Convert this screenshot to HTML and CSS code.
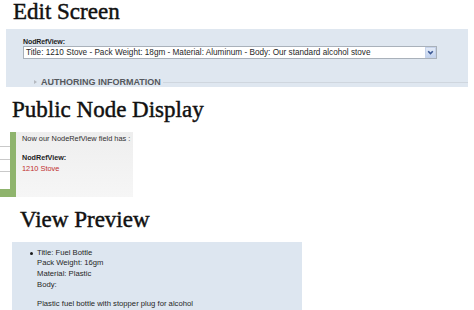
FILE: index.html
```html
<!DOCTYPE html>
<html>
<head>
<meta charset="utf-8">
<link rel="stylesheet" href="styles.css">
</head>
<body>
<h1 class="title title-edit">Edit Screen</h1>
<div class="edit-panel">
  <div class="field-label">NodRefView:</div>
  <div class="select">
    <div class="select-text">Title: 1210 Stove - Pack Weight: 18gm - Material: Aluminum - Body: Our standard alcohol stove</div>
    <div class="select-btn">
      <svg width="9" height="11" viewBox="0 0 9 11"><polyline points="2.2,4.3 4.5,6.6 6.8,4.3" fill="none" stroke="#3a5793" stroke-width="1.6"/></svg>
    </div>
  </div>
  <div class="legend-row">
    <span class="legend-arrow"></span>
    <span class="legend-text">AUTHORING INFORMATION</span>
    <span class="legend-line"></span>
  </div>
</div>

<h1 class="title title-public">Public Node Display</h1>
<div class="public-panel">
  <div class="side">
    <div class="side-row r1"></div>
    <div class="side-row r2"></div>
    <div class="side-row r3"></div>
    <div class="side-green"></div>
  </div>
  <div class="green-bar"></div>
  <div class="node-content">
    <div class="node-intro">Now our NodeRefView field has :</div>
    <div class="node-label">NodRefView:</div>
    <div class="node-value">1210 Stove</div>
  </div>
</div>

<h1 class="title title-view">View Preview</h1>
<div class="preview-panel">
  <div class="item">
    <span class="bullet"></span>
    <div class="item-text">
      <div>Title: Fuel Bottle<br>Pack Weight: 16gm<br>Material: Plastic<br>Body:</div>
      <p class="body-text">Plastic fuel bottle with stopper plug for alcohol</p>
    </div>
  </div>
</div>
</body>
</html>
```

FILE: styles.css
```css
html, body {
  margin: 0;
  padding: 0;
  background: #ffffff;
  width: 474px;
  height: 310px;
  overflow: hidden;
  font-family: "Liberation Sans", Arial, sans-serif;
}

.title {
  margin: 0;
  font-family: "Liberation Serif", "Times New Roman", serif;
  font-weight: normal;
  font-size: 23px;
  line-height: 23px;
  color: #111111;
  white-space: nowrap;
  -webkit-text-stroke: 0.45px #111111;
}

.title-edit { padding-left: 13px; }
.title-public { padding-left: 12px; margin-top: 11px; }
.title-view { padding-left: 20px; margin-top: 11px; }

/* Edit screen */
.edit-panel {
  margin-top: 6px;
  margin-left: 6px;
  width: 462px;
  height: 58px;
  overflow: hidden;
  background: #dfe7f0;
  padding-left: 17px;
  padding-top: 9px;
  box-sizing: border-box;
}

.field-label {
  font-size: 7px;
  font-weight: bold;
  line-height: 8px;
  color: #1d1d1d;
  letter-spacing: -0.1px;
}

.select {
  width: 414px;
  height: 13px;
  box-sizing: border-box;
  border: 1px solid #a9b1ba;
  background: #ffffff;
  display: flex;
}

.select-text {
  flex: 1;
  font-size: 8.2px;
  line-height: 11px;
  color: #1f1f1f;
  padding-left: 2px;
  white-space: nowrap;
  overflow: hidden;
}

.select-btn {
  width: 11px;
  height: 11px;
  box-sizing: border-box;
  border: 1px solid #c6d3ea;
  background: linear-gradient(#e3ebf8, #c3d3ee);
  display: flex;
  align-items: center;
  justify-content: center;
}

.select-btn svg { display: block; }

.legend-row {
  margin-top: 18px;
  height: 10px;
  display: flex;
  align-items: center;
  margin-left: 11px;
}

.legend-arrow {
  width: 0;
  height: 0;
  border-top: 2.5px solid transparent;
  border-bottom: 2.5px solid transparent;
  border-left: 3px solid #b4b9bf;
  margin-right: 4px;
}

.legend-text {
  font-size: 9px;
  font-weight: bold;
  line-height: 10px;
  color: #55585d;
  white-space: nowrap;
}

.legend-line {
  flex: 1;
  height: 1px;
  background: #cfd6de;
  margin-left: 2px;
}

/* Public node display */
.public-panel {
  margin-top: 11px;
  height: 65px;
  width: 133px;
  display: flex;
}

.side {
  width: 10px;
  display: flex;
  flex-direction: column;
  background: #ffffff;
}

.side-row {
  border-bottom: 1px solid #c9c9c9;
  box-sizing: border-box;
}

.r1 { height: 15px; }
.r2 { height: 13px; }
.r3 { height: 12px; }

.side-green {
  margin-top: auto;
  height: 8px;
  background: #8fb46d;
}

.green-bar {
  width: 6px;
  background: #8fb46d;
}

.node-content {
  flex: 1;
  overflow: hidden;
  background: linear-gradient(#eeeeee, #f6f6f6);
  padding-left: 6px;
  padding-top: 2px;
  white-space: nowrap;
  color: #2e2e2e;
}

.node-intro {
  font-size: 7.4px;
  line-height: 10px;
}

.node-label {
  margin-top: 8px;
  font-size: 7.2px;
  font-weight: bold;
  line-height: 11px;
  color: #1d1d1d;
}

.node-value {
  font-size: 7.4px;
  line-height: 11px;
  color: #c0302e;
}

/* View preview */
.preview-panel {
  margin-top: 11px;
  margin-left: 12px;
  width: 290px;
  height: 80px;
  background: #dde6f0;
  padding-top: 5.5px;
  box-sizing: border-box;
}

.item {
  display: flex;
  align-items: flex-start;
}

.bullet {
  width: 3px;
  height: 3px;
  border-radius: 50%;
  background: #1a1a1a;
  margin-left: 18px;
  margin-top: 4px;
}

.item-text {
  margin-left: 4px;
  font-size: 7.7px;
  line-height: 10.7px;
  color: #262626;
  white-space: nowrap;
}

.body-text {
  margin: 9px 0 0 0;
}
```
